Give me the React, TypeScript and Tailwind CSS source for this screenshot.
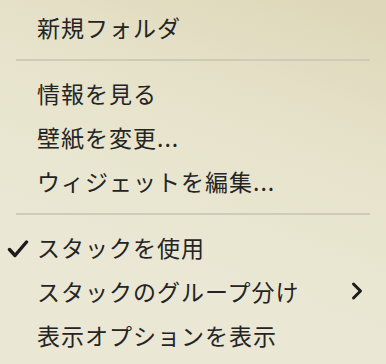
type Item = { label: string; checked?: boolean; submenu?: boolean }

const groups: Item[][] = [
  [{ label: '新規フォルダ' }],
  [{ label: '情報を見る' }, { label: '壁紙を変更...' }, { label: 'ウィジェットを編集...' }],
  [
    { label: 'スタックを使用', checked: true },
    { label: 'スタックのグループ分け', submenu: true },
    { label: '表示オプションを表示' },
  ],
]

function MenuRow({ item }: { item: Item }) {
  return (
    <div className="flex h-[44px] items-center pl-[7px] pr-[22px]">
      <span className="flex w-[30px] shrink-0 items-center">
        {item.checked ? (
          <svg width="22" height="18" viewBox="0 0 22 18" fill="none" className="mt-[3px]">
            <polyline
              points="2.5,9.5 8,15.5 19.5,2"
              stroke="#1c1c1c"
              strokeWidth="3.4"
              strokeLinecap="round"
              strokeLinejoin="round"
            />
          </svg>
        ) : null}
      </span>
      <span className="flex-1 text-[23px] leading-none tracking-[1px] text-[#242424]">{item.label}</span>
      {item.submenu ? (
        <svg width="14" height="20" viewBox="0 0 14 20" fill="none">
          <polyline
            points="3.5,3 10.5,10 3.5,17"
            stroke="#1c1c1c"
            strokeWidth="3"
            strokeLinecap="round"
            strokeLinejoin="round"
          />
        </svg>
      ) : null}
    </div>
  )
}

export default function App() {
  return (
    <div
      className="h-[364px] w-[386px] overflow-hidden bg-[linear-gradient(200deg,#ddd6b8_0%,#e7e3cb_35%,#eae8d5_70%,#eae8d5_100%)] pt-[5px]"
      style={{ fontFamily: '"Noto Sans CJK JP", "Noto Sans", sans-serif' }}
    >
      {groups.map((group, gi) => (
        <div key={gi}>
          {gi > 0 ? (
            <div className="flex h-[22px] items-center px-[16px]">
              <div className="h-[2px] w-full bg-[#cfcbb8]" />
            </div>
          ) : null}
          {group.map((item) => (
            <MenuRow key={item.label} item={item} />
          ))}
        </div>
      ))}
    </div>
  )
}
